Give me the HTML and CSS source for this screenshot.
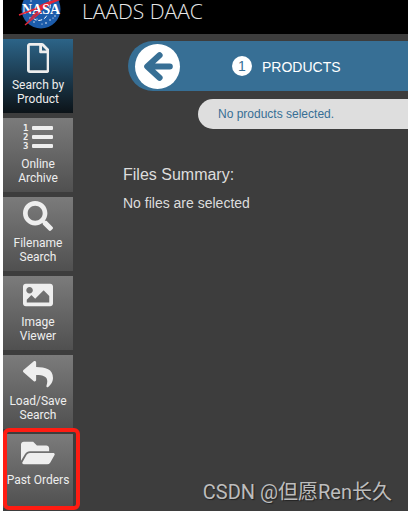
FILE: index.html
```html
<!DOCTYPE html>
<html lang="en">
<head>
<meta charset="utf-8">
<title>LAADS DAAC</title>
<link rel="stylesheet" href="styles.css">
</head>
<body>
<header class="top">
  <svg class="logo" viewBox="0 0 40 40" aria-label="NASA" role="img">
    <circle cx="20" cy="20" r="19.5" fill="#1c5cab"/>
    <g fill="#fff">
      <circle cx="9" cy="29" r=".7"/><circle cx="13" cy="33" r=".7"/><circle cx="16" cy="30" r=".6"/><circle cx="25" cy="34" r=".8"/><circle cx="29" cy="31" r=".7"/><circle cx="32" cy="29" r=".6"/><circle cx="21" cy="35" r=".6"/><circle cx="34" cy="27" r=".7"/><circle cx="10" cy="12" r=".7"/>
    </g>
    <path d="M12 29Q17 34 24 29Q32 19 28 9" fill="none" stroke="#fff" stroke-width="1" stroke-dasharray="4 2"/>
    <path d="M-2 26L12 20Q26 11 40 10Q30 14 24 19Q12 27 4 36Q11 26 19 19L12 22Z" fill="#e32636"/>
    <text class="logo-text" x="20" y="25" text-anchor="middle">NASA</text>
    <path d="M-2 26L14 20M27 15L40 10M4 36L20 23" fill="none" stroke="#e32636" stroke-width="1.4"/>
  </svg>
  <span class="site">LAADS DAAC</span>
</header>
<div class="body">
  <nav class="side">
    <a class="tile active" href="#"><svg viewBox="0 0 384 512"><path d="M369.9 97.9L286 14C277 5 264.8-.1 252.1-.1H48C21.5 0 0 21.5 0 48v416c0 26.5 21.5 48 48 48h288c26.5 0 48-21.5 48-48V131.9c0-12.7-5.1-25-14.1-34zM332.1 128H256V51.9l76.1 76.1zM48 464V48h160v104c0 13.3 10.7 24 24 24h104v288H48z"/></svg><span>Search by Product</span></a>
    <a class="tile" href="#"><svg viewBox="0 0 30 30"><path d="M10 4h19a1 1 0 0 1 1 1v2a1 1 0 0 1-1 1H10a1 1 0 0 1-1-1V5a1 1 0 0 1 1-1zM10 13h19a1 1 0 0 1 1 1v2a1 1 0 0 1-1 1H10a1 1 0 0 1-1-1v-2a1 1 0 0 1 1-1zM10 22h19a1 1 0 0 1 1 1v2a1 1 0 0 1-1 1H10a1 1 0 0 1-1-1v-2a1 1 0 0 1 1-1z"/><g class="digits"><text x="0" y="9">1</text><text x="0" y="18">2</text><text x="0" y="27">3</text></g></svg><span>Online Archive</span></a>
    <a class="tile" href="#"><svg viewBox="0 0 512 512"><path d="M505 442.7L405.3 343c-4.5-4.5-10.6-7-17-7H372c27.6-35.3 44-79.7 44-128C416 93.1 322.9 0 208 0S0 93.1 0 208s93.1 208 208 208c48.3 0 92.7-16.4 128-44v16.3c0 6.4 2.5 12.5 7 17l99.7 99.7c9.4 9.4 24.6 9.4 33.9 0l28.3-28.3c9.4-9.4 9.4-24.6.1-34zM208 336c-70.7 0-128-57.2-128-128 0-70.7 57.2-128 128-128 70.7 0 128 57.2 128 128 0 70.7-57.2 128-128 128z"/></svg><span>Filename Search</span></a>
    <a class="tile" href="#"><svg viewBox="0 0 512 512"><path d="M464 448H48c-26.51 0-48-21.49-48-48V112c0-26.51 21.49-48 48-48h416c26.51 0 48 21.49 48 48v288c0 26.51-21.49 48-48 48zM112 120c-30.928 0-56 25.072-56 56s25.072 56 56 56 56-25.072 56-56-25.072-56-56-56zM64 384h384V272l-87.515-87.515c-4.686-4.686-12.284-4.686-16.971 0L208 320l-55.515-55.515c-4.686-4.686-12.284-4.686-16.971 0L64 336v48z"/></svg><span>Image Viewer</span></a>
    <a class="tile" href="#"><svg viewBox="0 0 512 512"><path d="M8.309 189.836L184.313 37.851C199.719 24.546 224 35.347 224 56.015v80.053c160.629 1.839 288 34.032 288 186.258 0 61.441-39.581 122.309-83.333 154.132-13.653 9.931-33.111-2.533-28.077-18.631 45.344-145.012-21.507-183.51-176.59-185.742V360c0 20.7-24.3 31.453-39.687 18.164l-176.004-152c-11.071-9.562-11.086-26.753 0-36.328z"/></svg><span>Load/Save Search</span></a>
    <a class="tile marked" href="#"><svg viewBox="0 0 576 512"><path d="M572.694 292.093L500.27 416.248A63.997 63.997 0 0 1 444.989 448H45.025c-18.523 0-30.064-20.093-20.731-36.093l72.424-124.155A64 64 0 0 1 152 256h399.964c18.523 0 30.064 20.093 20.73 36.093zM152 224h328v-48c0-26.51-21.49-48-48-48H272l-64-64H48C21.49 64 0 85.49 0 112v278.046l69.077-118.418C86.214 242.25 117.989 224 152 224z"/></svg><span>Past Orders</span></a>
  </nav>
  <main class="main">
    <div class="steps">
      <button class="back" type="button" aria-label="Back"><svg viewBox="0 0 44 44"><path d="M24 11L12 22L24 33M13 22H34" fill="none" stroke="#376f95" stroke-width="6" stroke-linecap="round" stroke-linejoin="round"/></svg></button>
      <span class="num">1</span>
      <span class="step">PRODUCTS</span>
    </div>
    <p class="notice">No products selected.</p>
    <section class="summary">
      <h2>Files Summary:</h2>
      <p>No files are selected</p>
    </section>
  </main>
</div>
<div class="watermark">CSDN @但愿Ren长久</div>
</body>
</html>
```
FILE: styles.css
```css
* { box-sizing: border-box; }
html { background: #3d3d3d; }
body {
  margin: 0;
  min-height: 100vh;
  border-left: 3px solid #fff;
  background: #3d3d3d;
  color: #ddd;
  font-family: "Liberation Sans", Arial, sans-serif;
  overflow: hidden;
}
h2, p { margin: 0; font-weight: 400; }
.top {
  display: flex;
  align-items: flex-end;
  height: 34px;
  padding-left: 18px;
  background: #000;
}
.logo { width: 40px; height: 40px; margin-bottom: 5px; flex: none; overflow: visible; }
.logo-text { font: 700 14px "Liberation Serif", serif; fill: #fff; }
.site {
  margin: 0 0 12px 21px;
  color: #e8e8e8;
  font: 300 21px/22px "Open Sans", sans-serif;
}
.body { display: flex; padding-top: 5px; }
.side { display: flex; flex-direction: column; gap: 5px; width: 70px; flex: none; }
.tile {
  position: relative;
  display: flex;
  flex-direction: column;
  align-items: center;
  gap: 5px;
  height: 74px;
  padding-top: 4px;
  background: linear-gradient(#7b7b7b, #505050);
  color: #eee;
  font: 12px/14px Roboto, sans-serif;
  text-align: center;
  text-decoration: none;
}
.tile.active { background: linear-gradient(#2c6488, #0c1318); }
.tile svg { height: 30px; fill: #eee; flex: none; }
.digits { font: 700 9px/9px "DejaVu Sans Mono", monospace; }
.marked::after {
  content: "";
  position: absolute;
  inset: -6px -7px -2px 0;
  border: 4px solid #ff1c12;
  border-radius: 6px;
}
.main { flex: 1; min-width: 0; padding: 2px 0 0 50px; }
.steps {
  display: flex;
  align-items: center;
  height: 50px;
  margin-left: 5px;
  padding-left: 7px;
  border-radius: 25px 0 0 25px;
  background: #376f95;
  color: #fff;
  font-size: 14px;
}
.back { width: 45px; height: 45px; padding: 0; border: 0; border-radius: 50%; background: #fff; }
.back svg { display: block; width: 45px; height: 45px; }
.num {
  width: 20px;
  margin: 0 10px 0 52px;
  border-radius: 50%;
  background: #fff;
  color: #376f95;
  font-size: 14px;
  line-height: 20px;
  text-align: center;
}
.step { padding-top: 2px; }
.notice {
  margin: 8px 0 0 75px;
  padding-left: 20px;
  border-radius: 15px 0 0 15px;
  background: #dedede;
  color: #376f95;
  font-size: 12px;
  line-height: 30px;
}
.summary { padding-top: 36px; }
.summary h2 { font-size: 16px; line-height: 20px; }
.summary p { margin-top: 8px; font-size: 14px; line-height: 20px; }
.watermark {
  position: absolute;
  right: 16px;
  bottom: 5px;
  color: #bdbdbd;
  font: 20px/28px Roboto, "Noto Sans CJK SC", sans-serif;
  text-shadow: 1px 1px 1px #222;
}
```
